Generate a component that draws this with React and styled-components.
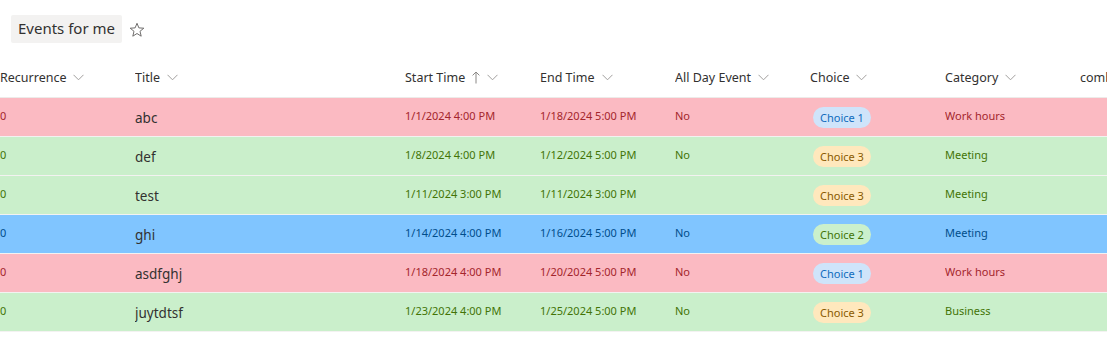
import React from 'react';
import styled, { createGlobalStyle } from 'styled-components';

const GlobalStyle = createGlobalStyle`
  body {
    margin: 0;
    padding: 0;
    background: #ffffff;
    overflow: hidden;
    font-family: 'Segoe UI', 'Noto Sans', 'Open Sans', sans-serif;
  }
`;

const tones = {
  red: { bg: '#fbbac2', fg: '#a4262c' },
  green: { bg: '#caefcb', fg: '#437406' },
  blue: { bg: '#80c5ff', fg: '#004e8c' },
};

const pills = {
  'Choice 1': { bg: '#cfe4fa', fg: '#0f6cbd' },
  'Choice 2': { bg: '#caf0cc', fg: '#437406' },
  'Choice 3': { bg: '#ffe8bd', fg: '#8a5a00' },
};

const columns = [
  { key: 'rec', label: 'Recurrence', width: 135 },
  { key: 'title', label: 'Title', width: 270 },
  { key: 'start', label: 'Start Time', width: 135, sorted: true },
  { key: 'end', label: 'End Time', width: 135 },
  { key: 'allDay', label: 'All Day Event', width: 135 },
  { key: 'choice', label: 'Choice', width: 135 },
  { key: 'category', label: 'Category', width: 135 },
  { key: 'combo', label: 'combined', width: 135 },
];

const rows = [
  { tone: 'red', title: 'abc', start: '1/1/2024 4:00 PM', end: '1/18/2024 5:00 PM', allDay: 'No', choice: 'Choice 1', category: 'Work hours' },
  { tone: 'green', title: 'def', start: '1/8/2024 4:00 PM', end: '1/12/2024 5:00 PM', allDay: 'No', choice: 'Choice 3', category: 'Meeting' },
  { tone: 'green', title: 'test', start: '1/11/2024 3:00 PM', end: '1/11/2024 3:00 PM', allDay: '', choice: 'Choice 3', category: 'Meeting' },
  { tone: 'blue', title: 'ghi', start: '1/14/2024 4:00 PM', end: '1/16/2024 5:00 PM', allDay: 'No', choice: 'Choice 2', category: 'Meeting' },
  { tone: 'red', title: 'asdfghj', start: '1/18/2024 4:00 PM', end: '1/20/2024 5:00 PM', allDay: 'No', choice: 'Choice 1', category: 'Work hours' },
  { tone: 'green', title: 'juytdtsf', start: '1/23/2024 4:00 PM', end: '1/25/2024 5:00 PM', allDay: 'No', choice: 'Choice 3', category: 'Business' },
];

const Chevron = () => (
  <svg width="11" height="7" viewBox="0 0 11 7" fill="none">
    <path d="M0.5 0.8 L5.5 5.8 L10.5 0.8" stroke="#a19f9d" strokeWidth="1" />
  </svg>
);

const UpArrow = () => (
  <svg width="8" height="13" viewBox="0 0 8 13" fill="none">
    <path d="M4 1 V12.5 M0.6 4.4 L4 1 L7.4 4.4" stroke="#8a8886" strokeWidth="1" />
  </svg>
);

const Star = () => (
  <svg width="16" height="16" viewBox="0 0 16 16" fill="none">
    <path
      d="M8 1.3 L9.9 5.9 L14.8 6.2 L11 9.3 L12.2 14.2 L8 11.5 L3.8 14.2 L5 9.3 L1.2 6.2 L6.1 5.9 Z"
      stroke="#605e5c"
      strokeWidth="0.9"
      strokeLinejoin="round"
    />
  </svg>
);

const EventsList = () => (
  <Page>
    <TitleBar>
      <ViewName>Events for me</ViewName>
      <StarButton><Star /></StarButton>
    </TitleBar>
    <Table>
      <HeaderRow>
        {columns.map((c) => (
          <HeaderCell key={c.key} $width={c.width}>
            <span>{c.label}</span>
            {c.sorted && <UpArrow />}
            <Chevron />
          </HeaderCell>
        ))}
      </HeaderRow>
      {rows.map((r, i) => (
        <Row key={i} $tone={r.tone}>
          <Cell $width={135}>0</Cell>
          <TitleCell $width={270}>{r.title}</TitleCell>
          <Cell $width={135}>{r.start}</Cell>
          <Cell $width={135}>{r.end}</Cell>
          <Cell $width={135}>{r.allDay}</Cell>
          <Cell $width={135}>
            <Pill $kind={r.choice}>{r.choice}</Pill>
          </Cell>
          <Cell $width={135}>{r.category}</Cell>
          <Cell $width={135} />
        </Row>
      ))}
    </Table>
  </Page>
);

const Page = styled.div`
  width: 1107px;
  height: 338px;
  overflow: hidden;
  padding-top: 15px;
  box-sizing: border-box;
`;

const TitleBar = styled.div`
  display: flex;
  align-items: center;
  gap: 4px;
  padding-left: 11px;
  height: 28px;
`;

const ViewName = styled.div`
  background: #f3f2f1;
  color: #323130;
  font-size: 15px;
  height: 28px;
  line-height: 27px;
  padding: 0 7px;
  border-radius: 2px;
`;

const StarButton = styled.div`
  display: flex;
  align-items: center;
  padding-left: 3px;
  padding-top: 1px;
`;

const Table = styled.div`
  margin-top: 14px;
  width: 1215px;
`;

const HeaderRow = styled.div`
  display: flex;
  height: 40px;
  border-bottom: 1px solid #edebe9;
`;

const HeaderCell = styled.div`
  flex: 0 0 ${(p) => p.$width}px;
  display: flex;
  align-items: center;
  gap: 7px;
  font-size: 12.5px;
  color: #323130;
  white-space: nowrap;
  overflow: hidden;
  padding-top: 1px;

  svg {
    flex: none;
  }
`;

const Row = styled.div`
  display: flex;
  height: 38px;
  border-bottom: 1px solid #f3f2f1;
  background: ${(p) => tones[p.$tone].bg};
  color: ${(p) => tones[p.$tone].fg};
`;

const Cell = styled.div`
  flex: 0 0 ${(p) => p.$width}px;
  display: flex;
  align-items: center;
  font-size: 11px;
  white-space: nowrap;
  overflow: hidden;
  padding-bottom: 3px;
`;

const TitleCell = styled(Cell)`
  font-size: 13.5px;
  color: #323130;
  padding-bottom: 0;
  padding-top: 1px;
`;

const Pill = styled.span`
  margin-left: 3px;
  margin-top: 3px;
  height: 21px;
  line-height: 21px;
  padding: 0 7px;
  border-radius: 11px;
  font-size: 11px;
  background: ${(p) => pills[p.$kind].bg};
  color: ${(p) => pills[p.$kind].fg};
`;

const App = () => (
  <>
    <GlobalStyle />
    <EventsList />
  </>
);

export default App;
